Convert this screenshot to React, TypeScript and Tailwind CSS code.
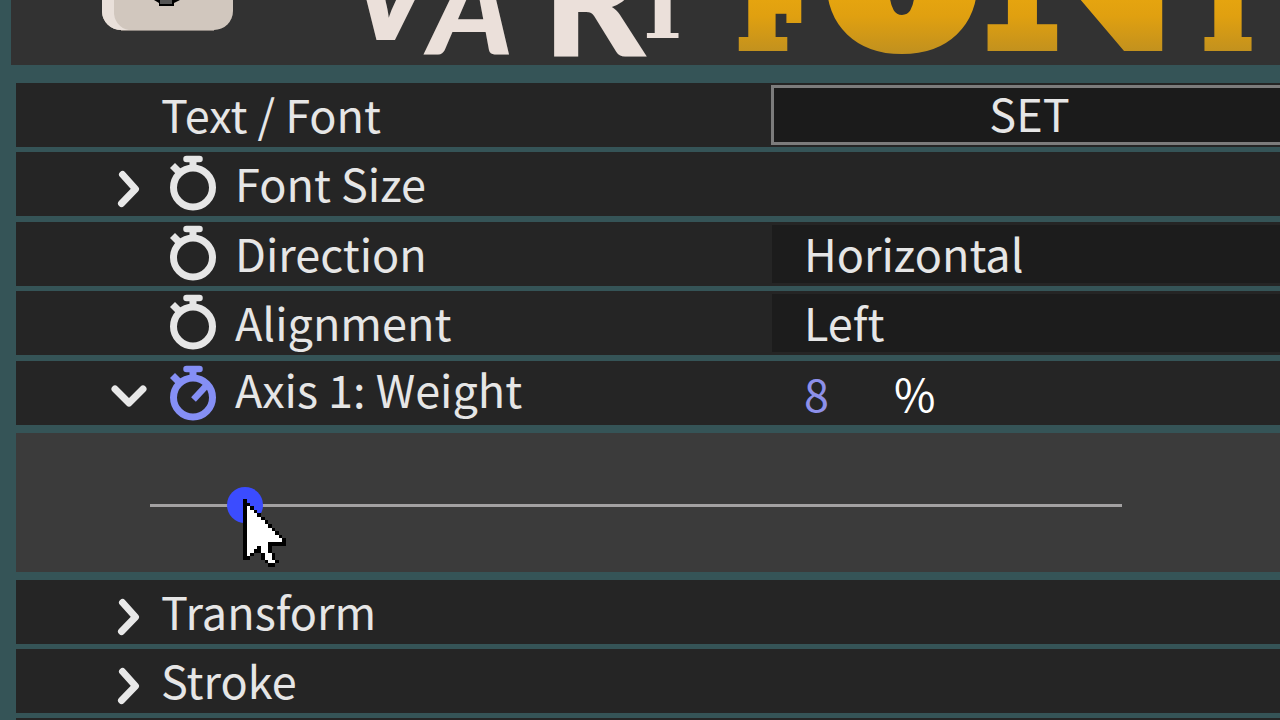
import { ReactNode, useState } from "react";
import { clsx } from "clsx";

const CURSOR_ROWS = [
  "X",
  "XX",
  "X.X",
  "X..X",
  "X...X",
  "X....X",
  "X.....X",
  "X......X",
  "X.......X",
  "X........X",
  "X.........X",
  "X..........X",
  "X......XXXXX",
  "X...X..X",
  "X..XX..X",
  "X.X  X..X",
  "XX   X..X",
  "      X..X",
  "       XX",
];

function PixelCursor() {
  return (
    <svg viewBox="0 0 12 19" className="w-[43px] h-[68px]" shapeRendering="crispEdges" aria-hidden="true">
      {CURSOR_ROWS.map((row, y) =>
        row.split("").map((cell, x) =>
          cell === " " ? null : (
            <rect key={`${x}-${y}`} x={x} y={y} width="1" height="1" fill={cell === "X" ? "#000" : "#fff"} />
          )
        )
      )}
    </svg>
  );
}

function Stopwatch({ active }: { active?: boolean }) {
  return (
    <svg
      viewBox="0 0 48 56"
      className={clsx("w-12 h-14", active ? "text-[#858ff5]" : "mb-0.5 text-[#e6e6e6]")}
      fill="none"
      stroke="currentColor"
      aria-hidden="true"
    >
      <circle cx="24" cy="32.5" r="19.5" strokeWidth="7" />
      <path d="M17.5 4h13" strokeWidth="6.5" strokeLinecap="round" />
      <path d="M24 3v10" strokeWidth="7" />
      <path d="M3.5 10.5l9 9" strokeWidth="7" />
      {active && <path d="M24.5 34.5L37 21" strokeWidth="6.5" />}
    </svg>
  );
}

function Chevron({ open }: { open?: boolean }) {
  return (
    <svg viewBox="0 0 40 40" className="w-10 h-10" fill="none" stroke="#e8e8e8" strokeWidth="7" strokeLinecap="round" strokeLinejoin="round" aria-hidden="true">
      {open ? <path d="M6 12l14 14 14-14" /> : <path d="M13.5 6.5l13 14.5-14 14.5" />}
    </svg>
  );
}

interface RowProps {
  label: string;
  htmlFor?: string;
  expandable?: boolean;
  open?: boolean;
  watch?: "idle" | "active";
  raised?: boolean;
  children?: ReactNode;
}

function Row({ label, htmlFor, expandable, open, watch, raised, children }: RowProps) {
  const [pressed, setPressed] = useState(false);
  const Label = htmlFor ? "label" : "span";

  return (
    <div className="h-16 grid grid-cols-[756px_1fr] items-center bg-[#252525]">
      <div className="flex items-center h-16 pl-[93px]">
        <div className="w-[52px] shrink-0 pt-2">
          {expandable && (
            <button type="button" aria-label={label} aria-expanded={open || pressed} onClick={() => setPressed(!pressed)} className="block">
              <Chevron open={open || pressed} />
            </button>
          )}
        </div>
        {watch && (
          <div className="w-[74px] shrink-0 pl-2">
            <Stopwatch active={watch === "active"} />
          </div>
        )}
        <Label htmlFor={htmlFor} className={clsx("whitespace-nowrap", raised ? "pb-2" : "pb-0.5")}>
          {label}
        </Label>
      </div>
      {children}
    </div>
  );
}

function Dropdown({ id, options }: { id: string; options: string[] }) {
  return (
    <select id={id} className="appearance-none h-[58px] w-full pl-8 pb-2 bg-[#1c1c1c] outline-none">
      {options.map((option) => (
        <option key={option}>{option}</option>
      ))}
    </select>
  );
}

function Banner() {
  return (
    <header className="ml-[11px] h-[65px] bg-[#323232] overflow-hidden">
      <svg viewBox="0 0 1269 65" className="block w-[1269px] h-[65px]" role="img" aria-label="VARI FONT">
        <defs>
          <linearGradient id="gold" gradientUnits="userSpaceOnUse" x1="0" y1="0" x2="0" y2="54">
            <stop offset="0" stopColor="#e5a40f" />
            <stop offset="0.3" stopColor="#e0a010" />
            <stop offset="1" stopColor="#c0901f" />
          </linearGradient>
        </defs>
        {/* Keycap */}
        <rect x="91" y="-40" width="131" height="70" rx="19" fill="#d1c7be" />
        <path d="M91 0v12a19 19 0 0 0 19 18h8a18 18 0 0 1-15-19v-11z" fill="#e9e0da" />
        <path d="M110 30.5h93" stroke="#8d8680" />
        <path d="M143 0h26l-6 3v3h-15v-3z" fill="#000" />
        <path d="M149 0h12v4h-12z" fill="#555" />
        <g fill="#ebe0da" fontFamily="Lato, sans-serif" fontWeight="900">
          <text x="334" y="40" fontSize="140" fontStyle="italic">V</text>
          <text x="418" y="54" fontSize="128" fontStyle="italic">A</text>
          <text x="531" y="56" fontSize="160">R</text>
        </g>
        <text x="632" y="38" fontSize="84" fill="#ebe0da" fontFamily="DejaVu Serif, serif" fontWeight="700">I</text>
        <g fill="url(#gold)" stroke="url(#gold)" fontFamily="DejaVu Serif, serif" fontWeight="700">
          <text x="727" y="47" fontSize="102" strokeWidth="8">F</text>
          <text x="824" y="37" fontSize="154" strokeWidth="30">O</text>
          <text x="974" y="44" fontSize="218" strokeWidth="14">N</text>
          <text x="1179" y="47" fontSize="102" strokeWidth="8">T</text>
        </g>
      </svg>
    </header>
  );
}

export default function App() {
  const [weight, setWeight] = useState(8.2);

  return (
    <div className="h-screen overflow-hidden bg-[#355457] text-[#e6e6e6] text-[45px] leading-[56px] font-['Noto_Sans_CJK_JP',sans-serif]">
      <Banner />
      <main className="pl-4 pt-[18px] flex flex-col gap-2">
        <section className="flex flex-col gap-1.5">
          <div className="flex flex-col gap-[5px]">
            <Row label="Text / Font">
              <button type="button" className="h-[60px] -ml-px -mr-2 pb-1 flex items-center justify-center bg-[#1b1b1b] border-[3px] border-[#7c7c7c]">
                SET
              </button>
            </Row>
            <Row label="Font Size" expandable watch="idle" />
          </div>
          <div className="flex flex-col gap-[5px]">
            <Row label="Direction" htmlFor="direction" watch="idle">
              <Dropdown id="direction" options={["Horizontal", "Vertical"]} />
            </Row>
            <Row label="Alignment" htmlFor="alignment" watch="idle">
              <Dropdown id="alignment" options={["Left", "Center", "Right"]} />
            </Row>
          </div>
          <Row label="Axis 1: Weight" htmlFor="weight" expandable open watch="active" raised>
            <output htmlFor="weight" className="flex pl-8">
              <span className="w-[90px] text-[#8d90ea]">{Math.round(weight)}</span>
              <span className="text-white">%</span>
            </output>
          </Row>
        </section>

        <section className="relative h-[139px] bg-[#3b3b3b] pl-[134px] pr-[158px] pt-1.5 flex items-center">
          <input
            id="weight"
            type="range"
            min={0}
            max={100}
            step={0.1}
            value={weight}
            onChange={(e) => setWeight(Number(e.target.value))}
            className="w-full h-9 appearance-none bg-transparent outline-none [&::-webkit-slider-runnable-track]:h-[3px] [&::-webkit-slider-runnable-track]:bg-[#a3a1a2] [&::-webkit-slider-thumb]:appearance-none [&::-webkit-slider-thumb]:size-9 [&::-webkit-slider-thumb]:-mt-[17px] [&::-webkit-slider-thumb]:rounded-full [&::-webkit-slider-thumb]:bg-[#3b4cff]"
          />
          <div className="absolute left-[227px] top-[66px] pointer-events-none">
            <PixelCursor />
          </div>
        </section>

        <section className="flex flex-col gap-[5px]">
          <Row label="Transform" expandable />
          <Row label="Stroke" expandable />
          <div className="h-16 bg-[#252525]" />
        </section>
      </main>
    </div>
  );
}
